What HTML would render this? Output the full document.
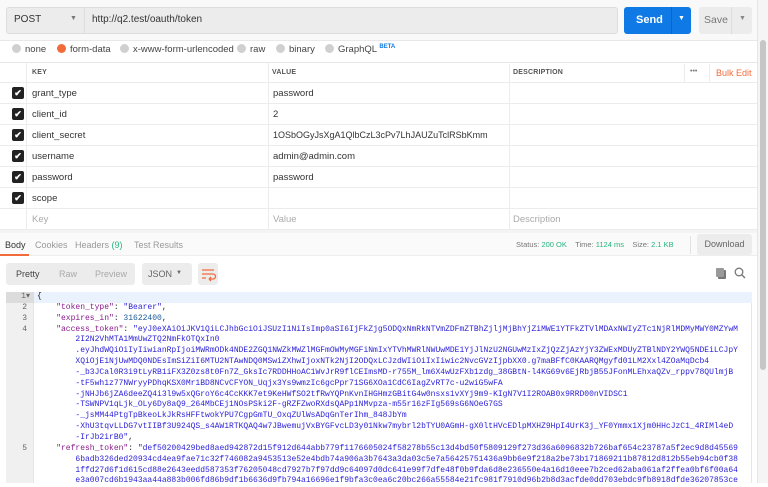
<!DOCTYPE html>
<html><head><meta charset="utf-8"><style>
*{box-sizing:border-box;margin:0;padding:0}
body{width:768px;height:483px;overflow:hidden;background:#fff;font-family:"Liberation Sans",sans-serif;font-size:10px;color:#333;position:relative}
.a{position:absolute}
.sb{left:757px;top:0;width:11px;height:483px;background:#f5f5f5;border-left:1px solid #e6e6e6}
.sb div{position:absolute;left:2px;top:40px;width:6px;height:330px;background:#c6c6c6;border-radius:3px}
.cb{width:12px;height:12px;background:#222;border-radius:2px;color:#fff;font-size:9px;line-height:12px;text-align:center;font-weight:bold}
.row{left:0;width:757px;height:21px;border-bottom:1px solid #ececec}
.row span{position:absolute;top:5px;font-size:9.5px;color:#333}
.row span.hd{font-size:7px;font-weight:bold;color:#555;letter-spacing:.2px;top:7px}
.rad{display:inline-block;width:9px;height:9px;border-radius:50%;background:#d0d0d0;vertical-align:-1px;margin-right:4px}
.code{font-family:"Liberation Mono",monospace;font-size:8px;line-height:10.85px;white-space:pre;color:#2a1fd6}
.k{color:#8a1a8a}.n{color:#1a5a9a}
.ln{position:absolute;left:0;width:27px;text-align:right;color:#666;font-family:"Liberation Mono",monospace;font-size:8px}
</style></head><body>
<div class="a" style="left:0;top:0;width:757px;height:40px;background:#f9f9f9"></div>
<div class="a" style="left:6px;top:7px;width:612px;height:27px;background:#ececec;border:1px solid #ddd;border-radius:3px"></div>
<div class="a" style="left:84px;top:8px;width:1px;height:25px;background:#ddd"></div>
<div class="a" style="left:14px;top:14px;font-size:10px;color:#333">POST</div>
<div class="a" style="left:70px;top:15px;font-size:7px;color:#777">▼</div>
<div class="a" style="left:92px;top:14px;font-size:10px;color:#333">http://q2.test/oauth/token</div>
<div class="a" style="left:624px;top:7px;width:67px;height:27px;background:#0f7ae5;border-radius:3px"></div>
<div class="a" style="left:671px;top:7px;width:1px;height:27px;background:#0b66c2"></div>
<div class="a" style="left:636px;top:14px;color:#fff;font-size:11px;font-weight:bold">Send</div>
<div class="a" style="left:678px;top:15px;color:#fff;font-size:7px">▼</div>
<div class="a" style="left:699px;top:7px;width:53px;height:27px;background:#ececec;border-radius:3px"></div>
<div class="a" style="left:731px;top:7px;width:1px;height:27px;background:#ddd"></div>
<div class="a" style="left:704px;top:14px;color:#777;font-size:10.5px">Save</div>
<div class="a" style="left:739px;top:15px;color:#888;font-size:7px">▼</div>
<div class="a" style="left:0;top:40px;width:757px;height:1px;background:#e8e8e8"></div>
<div class="a" style="left:12px;top:44px;font-size:9.5px;color:#444"><span class="rad"></span>none</div>
<div class="a" style="left:57px;top:44px;font-size:9.5px;color:#444"><span class="rad" style="background:#f26b3a"></span>form-data</div>
<div class="a" style="left:120px;top:44px;font-size:9.5px;color:#444"><span class="rad"></span>x-www-form-urlencoded</div>
<div class="a" style="left:237px;top:44px;font-size:9.5px;color:#444"><span class="rad"></span>raw</div>
<div class="a" style="left:276px;top:44px;font-size:9.5px;color:#444"><span class="rad"></span>binary</div>
<div class="a" style="left:325px;top:44px;font-size:9.5px;color:#444"><span class="rad"></span>GraphQL <sup style="color:#0f7ae5;font-size:6px;font-weight:bold">BETA</sup></div>
<div class="a" style="left:0;top:62px;width:757px;height:1px;background:#e6e6e6"></div>
<div class="a row" style="top:62px;height:21px"><span class="hd" style="left:32px">KEY</span><span class="hd" style="left:272px">VALUE</span><span class="hd" style="left:513px">DESCRIPTION</span><span style="left:690px;top:6px;color:#777;font-size:7px">•••</span><span style="left:716px;top:6px;color:#f26b3a;font-size:9px">Bulk Edit</span></div>
<div class="a row" style="top:83px"><div class="a cb" style="left:12px;top:4px">✔</div><span style="left:32px">grant_type</span><span style="left:273px">password</span></div>
<div class="a row" style="top:104px"><div class="a cb" style="left:12px;top:4px">✔</div><span style="left:32px">client_id</span><span style="left:273px">2</span></div>
<div class="a row" style="top:125px"><div class="a cb" style="left:12px;top:4px">✔</div><span style="left:32px">client_secret</span><span style="left:273px;font-size:9px">1OSbOGyJsXgA1QlbCzL3cPv7LhJAUZuTclRSbKmm</span></div>
<div class="a row" style="top:146px"><div class="a cb" style="left:12px;top:4px">✔</div><span style="left:32px">username</span><span style="left:273px">admin@admin.com</span></div>
<div class="a row" style="top:167px"><div class="a cb" style="left:12px;top:4px">✔</div><span style="left:32px">password</span><span style="left:273px">password</span></div>
<div class="a row" style="top:188px"><div class="a cb" style="left:12px;top:4px">✔</div><span style="left:32px">scope</span></div>
<div class="a row" style="top:209px"><span style="left:32px;color:#aaa">Key</span><span style="left:273px;color:#aaa">Value</span><span style="left:513px;color:#aaa">Description</span></div>
<div class="a" style="left:26px;top:62px;width:1px;height:168px;background:#ececec"></div>
<div class="a" style="left:268px;top:62px;width:1px;height:168px;background:#ececec"></div>
<div class="a" style="left:509px;top:83px;width:1px;height:147px;background:#ececec"></div>
<div class="a" style="left:509px;top:64px;width:1px;height:18px;background:#ececec"></div>
<div class="a" style="left:684px;top:64px;width:1px;height:18px;background:#ececec"></div>
<div class="a" style="left:709px;top:64px;width:1px;height:18px;background:#ececec"></div>
<div class="a" style="left:0;top:230px;width:757px;height:3px;background:#f4f4f4"></div>
<div class="a" style="left:0;top:233px;width:757px;height:23px;background:#fafafa;border-bottom:1px solid #eee"></div>
<div class="a" style="left:5px;top:240px;font-size:9px;color:#333">Body</div>
<div class="a" style="left:0;top:254px;width:29px;height:2px;background:#f26b3a"></div>
<div class="a" style="left:35px;top:240px;font-size:9px;color:#999">Cookies</div>
<div class="a" style="left:75px;top:240px;font-size:9px;color:#999">Headers <span style="color:#26b47f">(9)</span></div>
<div class="a" style="left:134px;top:240px;font-size:9px;color:#999">Test Results</div>
<div class="a" style="left:516px;top:240px;font-size:7.5px;color:#777;white-space:nowrap">Status: <span style="color:#26b47f">200 OK</span>&nbsp;&nbsp;&nbsp;&nbsp;Time: <span style="color:#26b47f">1124 ms</span>&nbsp;&nbsp;&nbsp;&nbsp;Size: <span style="color:#26b47f">2.1 KB</span></div>
<div class="a" style="left:690px;top:236px;width:1px;height:18px;background:#e2e2e2"></div>
<div class="a" style="left:697px;top:234px;width:55px;height:21px;background:#ececec;border-radius:3px;color:#666;font-size:9px;text-align:center;line-height:21px">Download</div>
<div class="a" style="left:6px;top:263px;width:129px;height:22px;background:#ececec;border-radius:3px"></div>
<div class="a" style="left:16px;top:269px;font-size:9px;color:#444">Pretty</div>
<div class="a" style="left:59px;top:269px;font-size:9px;color:#aaa">Raw</div>
<div class="a" style="left:95px;top:269px;font-size:9px;color:#aaa">Preview</div>
<div class="a" style="left:142px;top:263px;width:50px;height:22px;background:#ececec;border-radius:3px"></div>
<div class="a" style="left:148px;top:269px;font-size:9px;color:#666">JSON</div>
<div class="a" style="left:176px;top:270px;font-size:6px;color:#666">▼</div>
<div class="a" style="left:198px;top:263px;width:20px;height:22px;background:#ececec;border-radius:3px">
<svg width="20" height="22" viewBox="0 0 20 22"><path d="M4 7h12M4 11h11a2.5 2.5 0 0 1 0 5h-4M4 15h4M11 16l2-2M11 16l2 2" stroke="#f26b3a" stroke-width="1.3" fill="none"/></svg></div>
<div class="a" style="left:718px;top:270px;width:8px;height:9px;background:#777;border-radius:1px"></div>
<div class="a" style="left:716px;top:268px;width:8px;height:9px;background:#999;border-radius:1px"></div>
<svg class="a" style="left:734px;top:267px" width="12" height="12"><circle cx="5" cy="5" r="3.8" stroke="#777" stroke-width="1.3" fill="none"/><path d="M8 8l3 3" stroke="#777" stroke-width="1.4"/></svg>
<div class="a" style="left:6px;top:292px;width:28px;height:191px;background:#f0f0f0;border-right:1px solid #e6e6e6"></div>
<div class="a" style="left:34px;top:292px;width:718px;height:191px;background:#fff;border:1px solid #e6e6e6;border-bottom:none;border-left:none"></div>
<div class="a" style="left:34px;top:292px;width:718px;height:11px;background:#eaf2fd"></div>
<div class="a" style="left:6px;top:292px;width:28px;height:11px;background:#dcdcdc"></div>
<div class="a" style="left:0;top:292px;width:34px;font-family:'Liberation Mono',monospace;font-size:8px;line-height:10.85px;color:#666">
<div class="ln" style="top:0;width:30px">1▾</div><div class="ln" style="top:10.85px">2</div><div class="ln" style="top:21.7px">3</div><div class="ln" style="top:32.55px">4</div><div class="ln" style="top:152px">5</div></div>
<div class="a code" style="left:37px;top:292px;width:720px;overflow:hidden;color:#222">{
    <span class="k">"token_type"</span>: <span style="color:#2a1fd6">"Bearer"</span>,
    <span class="k">"expires_in"</span>: <span class="n">31622400</span>,
    <span class="k">"access_token"</span>: <span style="color:#2a1fd6">"eyJ0eXAiOiJKV1QiLCJhbGciOiJSUzI1NiIsImp0aSI6IjFkZjg5ODQxNmRkNTVmZDFmZTBhZjljMjBhYjZiMWE1YTFkZTVlMDAxNWIyZTc1NjRlMDMyMWY0MZYwM
        2I2N2VhMTA1MmUwZTQ2NmFkOTQxIn0
        .eyJhdWQiOiIyIiwianRpIjoiMWRmODk4NDE2ZGQ1NWZkMWZlMGFmOWMyMGFiNmIxYTVhMWRlNWUwMDE1YjJlNzU2NGUwMzIxZjQzZjAzYjY3ZWExMDUyZTBlNDY2YWQ5NDEiLCJpY
        XQiOjE1NjUwMDQ0NDEsImSiZiI6MTU2NTAwNDQ0MSwiZXhwIjoxNTk2NjI2ODQxLCJzdWIiOiIxIiwic2NvcGVzIjpbXX0.g7maBFfC0KAARQMgyfd01LM2Xxl4ZOaMqDcb4
        -_b3JCal0R3i9tLyRB1iFX3Z0zs8t0Fn7Z_GksIc7RDDHHoAC1WvJrR9flCEImsMD-r755M_lm6X4wUzFXb1zdg_38GBtN-l4KG69v6EjRbjB55JFonMLEhxaQZv_rppv78QUlmjB
        -tF5wh1z77NWryyPDhqKSX0Mr1BD8NCvCFYON_Uqjx3Ys9wmzIc6gcPpr71SG6XOa1CdC6IagZvRT7c-u2wiG5wFA
        -jNHJb6jZA6deeZQ4i3l9w5xQGroY6c4CcKKK7et9KeHWfSO2tfRwYQPnKvnIHGHmzGBitG4w0nsxs1vXYj9m9-KIgN7V1I2ROAB0x9RRD00nVIDSC1
        -TSWNPV1qLjk_OLy6Dy8aQ9_264MbCEj1NOsPSki2F-gRZFZwoRXdsQAPp1NMvpza-m55r16zFIg569sG6NOeG7GS
        -_jsMM44PtgTpBkeoLkJkRsHFFtwokYPU7CgpGmTU_OxqZUlWsADqGnTerIhm_848JbYm
        -XhU3tqvLLDG7vtIIBf3U924QS_s4AW1RTKQAQ4w7JBwemujVxBYGFvcLD3y01Nkw7mybrl2bTYU0AGmH-gX0ltHVcEDlpMXHZ9HpI4UrK3j_YF0Ymmx1Xjm0HHcJzC1_4RIMl4eD
        -IrJb2irB0"</span>,
    <span class="k">"refresh_token"</span>: <span style="color:#2a1fd6">"def50200429bed8aed942872d15f912d644abb779f1176605024f58278b55c13d4bd50f5809129f273d36a6096832b726baf654c23787a5f2ec9d8d45569
        6badb326ded20934cd4ea9fae71c32f746082a9453513e52e4bdb74a906a3b7643a3da03c5e7a56425751436a9bb6e9f218a2be73b171869211b87812d812b55eb94cb0f38
        1ffd27d6f1d615cd88e2643eedd587353f76205048cd7927b7f97dd9c64097d0dc641e99f7dfe48f0b9fda6d8e236550e4a16d10eee7b2ced62aba061af2ffea0bf6f00a64
        e3a007cd6b1943aa44a883b006fd86b9df1b6636d9fb794a16696e1f9bfa3c0ea6c20bc266a55584e21fc981f7910d96b2b8d3acfde0dd703ebdc9fb8918dfde36207853ce</span></div>
<div class="a sb"><div></div></div>
</body></html>
